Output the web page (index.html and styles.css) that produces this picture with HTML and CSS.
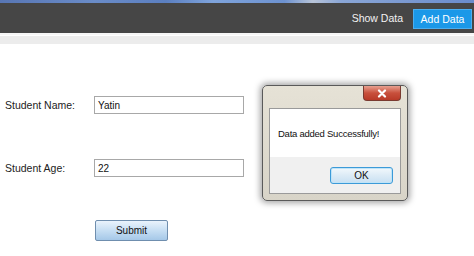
FILE: index.html
```html
<!DOCTYPE html>
<html>
<head>
<meta charset="utf-8">
<link rel="stylesheet" href="styles.css">
</head>
<body>
<div class="strip"></div>
<header class="nav">
  <span class="nav-link">Show Data</span>
  <span class="nav-btn">Add Data</span>
</header>
<div class="band"></div>
<main class="form">
  <label class="lbl">Student Name:</label>
  <div class="input">Yatin</div>
  <label class="lbl lbl-age">Student Age:</label>
  <div class="input input-age">22</div>
  <div class="submit-cell"><span class="submit">Submit</span></div>
</main>
<div class="dialog">
  <div class="titlebar">
    <span class="close">
      <svg width="10" height="9" viewBox="0 0 10 9"><path d="M2 1.5 L8 7.5 M8 1.5 L2 7.5" stroke="#fff" stroke-width="2.2" stroke-linecap="round"/></svg>
    </span>
  </div>
  <div class="client">
    <div class="msg">Data added Successfully!</div>
    <div class="actions"><span class="ok">OK</span></div>
  </div>
</div>
</body>
</html>
```
FILE: styles.css
```css
html, body { margin: 0; padding: 0; background: #fff; }
body { width: 474px; height: 256px; overflow: hidden; position: relative; font-family: "Liberation Sans", Arial, sans-serif; }

.strip {
  height: 3px;
  background: linear-gradient(90deg, #5876b4 0%, #6a8cc8 20%, #5b7fc0 35%, #7fa4dc 45%, #6d92d0 60%, #b8c4d8 66%, #8aa6d6 72%, #6a8ccc 100%);
}
.nav {
  height: 30px;
  background: #464646;
  display: flex;
  align-items: center;
  justify-content: flex-end;
  padding-right: 2px;
  gap: 10px;
  border-bottom: 2px solid #f6f6f6;
}
.nav-link { color: #f2f2f2; font-size: 10.5px; }
.nav-btn {
  color: #fff; font-size: 10.5px;
  background: #1b98e8;
  border: 1px solid #4aaef0;
  height: 18px; width: 57px;
  display: flex; align-items: center; justify-content: center;
  margin-top: 2px;
}
.band { height: 8px; background: #ececec; margin-top: 1px; }

.form {
  display: grid;
  grid-template-columns: 89px 150px;
  grid-template-rows: 18px 18px 21px;
  row-gap: 45px;
  padding: 52px 0 0 5px;
}
.lbl { font-size: 10.5px; color: #222; align-self: center; }
.input {
  border: 1px solid #a8a8a8;
  font-size: 10px;
  color: #111;
  padding: 0 3px;
  display: flex; align-items: center;
}
.submit-cell { grid-column: 2; display: flex; margin-top: -2px; padding-left: 1px; }
.submit {
  width: 71px; height: 19px;
  border: 1px solid #6f8eae;
  border-radius: 2px;
  background: linear-gradient(#eaf3fc, #c6def3 50%, #a5c8e8);
  font-size: 10px; color: #111;
  display: flex; align-items: center; justify-content: center;
}

.dialog {
  position: absolute;
  left: 262px; top: 85px;
  width: 146px; height: 116px;
  background: linear-gradient(#e6e2d6, #d8d4c8);
  border: 1px solid #5a5a5a;
  border-radius: 5px;
  box-shadow: 0 0 6px 2px rgba(0,0,0,0.35);
  box-sizing: border-box;
  padding: 0 6px 6px 6px;
  display: flex; flex-direction: column;
}
.titlebar { height: 22px; display: flex; justify-content: flex-end; }
.close {
  width: 36px; height: 14px;
  background: linear-gradient(#e8a090, #c8503c 50%, #b83a28);
  border: 1px solid #7a3a30;
  border-top: none;
  border-radius: 0 0 4px 4px;
  display: flex; align-items: center; justify-content: center;
}
.client {
  flex: 1;
  border: 1px solid #9a9a9a;
  background: #f0f0f0;
  display: flex; flex-direction: column;
}
.msg {
  background: #fff;
  height: 48px;
  font-size: 9.5px;
  letter-spacing: -0.25px;
  color: #111;
  padding-left: 8px;
  display: flex; align-items: center;
}
.actions { flex: 1; display: flex; justify-content: flex-end; align-items: center; padding-right: 7px; }
.ok {
  width: 61px; height: 15px;
  border: 1px solid #3c9ad8;
  border-radius: 3px;
  background: linear-gradient(#f2f8fc, #dcebf6 50%, #c8e0f2);
  box-shadow: inset 0 0 0 1px #bfe4f8;
  font-size: 10px; color: #111;
  display: flex; align-items: center; justify-content: center;
}
```
